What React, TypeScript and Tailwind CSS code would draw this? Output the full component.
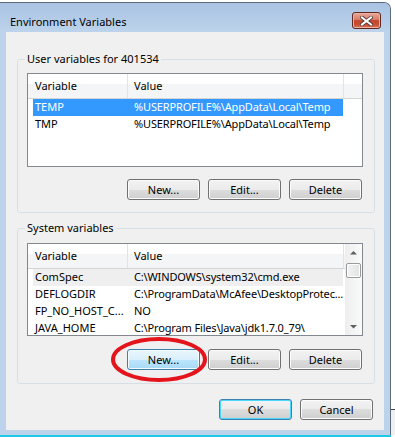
import React from "react";

const btn =
  "w-[73px] h-[21px] rounded-[3px] border border-[#707070] bg-[linear-gradient(to_bottom,#f2f2f2_0%,#ebebeb_50%,#dddddd_50%,#cfcfcf_100%)] shadow-[inset_0_0_0_1px_#fcfcfc] flex items-center justify-center text-black leading-none";
const btnHover =
  "w-[73px] h-[21px] rounded-[3px] border border-[#3c7fb1] bg-[linear-gradient(to_bottom,#eaf6fd_0%,#d9f0fc_50%,#bee6fd_50%,#a7d9f5_100%)] shadow-[inset_0_0_0_1px_#f4fbfe] flex items-center justify-center text-black leading-none";
const btnDefault =
  "w-[73px] h-[21px] rounded-[3px] border border-[#3c7fb1] bg-[linear-gradient(to_bottom,#f2f2f2_0%,#ebebeb_50%,#dddddd_50%,#cfcfcf_100%)] shadow-[inset_0_0_0_1px_#48d7fd] flex items-center justify-center text-black leading-none";

type Row = { name: string; value: string; state?: "sel" | "gray" };

function Header({ filler }: { filler: boolean }) {
  return (
    <div className="flex h-[25px] shrink-0 border-b border-[#d5d5d5] bg-[linear-gradient(to_bottom,#ffffff_0%,#ffffff_40%,#f4f5f7_40%,#f4f5f7_100%)]">
      <div className="w-[100px] pl-[7px] border-r border-[#e3e3e3] flex items-center">Variable</div>
      <div className="w-[216px] pl-[6px] border-r border-[#e3e3e3] flex items-center">Value</div>
      {filler ? <div className="flex-1" /> : null}
    </div>
  );
}

function Rows({ rows }: { rows: Row[] }) {
  return (
    <div className="flex flex-col pl-[5px]">
      {rows.map((r) => (
        <div
          key={r.name}
          className={
            r.state === "sel"
              ? "flex h-[17px] w-[310px] shrink-0 items-center bg-[#3399ff] text-white"
              : r.state === "gray"
              ? "flex h-[17px] w-[310px] shrink-0 items-center bg-[#efefef] text-black"
              : "flex h-[17px] w-[310px] shrink-0 items-center text-black"
          }
        >
          <div className="w-[94px] shrink-0 pl-[2px] whitespace-nowrap overflow-hidden">{r.name}</div>
          <div className="w-[216px] shrink-0 pl-[7px] whitespace-nowrap tracking-[-0.15px]">{r.value}</div>
        </div>
      ))}
    </div>
  );
}

function Arrow({ up }: { up: boolean }) {
  return (
    <svg width="17" height="17" viewBox="0 0 17 17">
      {up ? (
        <path d="M5 10.5 L8.5 7 L12 10.5 Z" fill="#606060" />
      ) : (
        <path d="M5 7 L8.5 10.5 L12 7 Z" fill="#606060" />
      )}
    </svg>
  );
}

export default function App() {
  const userRows: Row[] = [
    { name: "TEMP", value: "%USERPROFILE%\\AppData\\Local\\Temp", state: "sel" },
    { name: "TMP", value: "%USERPROFILE%\\AppData\\Local\\Temp" },
  ];
  const sysRows: Row[] = [
    { name: "ComSpec", value: "C:\\WINDOWS\\system32\\cmd.exe", state: "gray" },
    { name: "DEFLOGDIR", value: "C:\\ProgramData\\McAfee\\DesktopProtec..." },
    { name: "FP_NO_HOST_C...", value: "NO" },
    { name: "JAVA_HOME", value: "C:\\Program Files\\Java\\jdk1.7.0_79\\" },
  ];

  return (
    <div className="relative w-[395px] h-[437px] overflow-hidden bg-white font-['Segoe_UI','Noto_Sans',sans-serif] text-[11px] text-black">
      <div className="flex">
        {/* window */}
        <div className="mt-[2px] w-[391px] h-[433px] flex flex-col border-t border-r border-[#5b6b7c] rounded-tr-[7px] bg-[#bcd3eb] overflow-hidden">
          <div className="h-[29px] shrink-0 flex items-start bg-[linear-gradient(to_bottom,#a9c3e3,#bdd3eb)]">
            <div className="ml-[10px] mt-[11px] leading-[16px] text-[11px] text-black flex-1">Environment Variables</div>
            <div className="mt-[9px] mr-[9px] w-[29px] h-[17px] rounded-[3px] border border-[#5e2a22] bg-[linear-gradient(to_bottom,#e9a99b_0%,#d97b66_45%,#c34a2f_50%,#c74b31_75%,#d8765a_100%)] shadow-[inset_0_0_0_1px_#eab2a3] flex items-center justify-center">
              <svg width="13" height="10" viewBox="0 0 13 10">
                <path d="M2 1.5 L11 8.5 M11 1.5 L2 8.5" stroke="#4a3a38" strokeWidth="3.6" strokeLinecap="square" />
                <path d="M2 1.5 L11 8.5 M11 1.5 L2 8.5" stroke="#ffffff" strokeWidth="2" strokeLinecap="square" />
              </svg>
            </div>
          </div>
          {/* client area */}
          <div className="mx-[6px] w-[378px] h-[398px] shrink-0 bg-[#f0f0f0] flex flex-col">
            <fieldset className="mt-[19px] ml-[11px] w-[358px] border border-[#d5dfe5] rounded-[3px]">
              <legend className="ml-[7px] px-[2px] leading-[16px]">User variables for 401534</legend>
              <div className="pl-[9px] pr-[11px] pb-[12px]">
                <div className="mt-[6px] h-[94px] border border-[#828790] bg-white flex flex-col overflow-hidden">
                  <Header filler={true} />
                  <Rows rows={userRows} />
                </div>
                <div className="mt-[12px] flex justify-end gap-[8px] pr-[1px]">
                  <div className={btn}>New...</div>
                  <div className={btn}>Edit...</div>
                  <div className={btn}>Delete</div>
                </div>
              </div>
            </fieldset>

            <fieldset className="mt-[7px] ml-[11px] w-[358px] border border-[#d5dfe5] rounded-[3px]">
              <legend className="ml-[7px] px-[2px] leading-[16px]">System variables</legend>
              <div className="pl-[9px] pr-[11px] pb-[13px]">
                <div className="mt-[7px] h-[93px] border border-[#828790] bg-white flex overflow-hidden">
                  <div className="flex-1 flex flex-col overflow-hidden">
                    <Header filler={false} />
                    <Rows rows={sysRows} />
                  </div>
                  <div className="w-[17px] shrink-0 flex flex-col bg-[linear-gradient(to_right,#eeeeee,#fafafa)]">
                    <div className="h-[17px] shrink-0 flex items-center justify-center">
                      <Arrow up={true} />
                    </div>
                    <div className="mt-[2px] mx-[1px] h-[15px] rounded-[2px] border border-[#9a9a9a] bg-[linear-gradient(to_right,#f3f3f3,#e2e2e2)] shadow-[inset_0_0_0_1px_#ffffff]" />
                    <div className="flex-1" />
                    <div className="h-[17px] shrink-0 flex items-center justify-center">
                      <Arrow up={false} />
                    </div>
                  </div>
                </div>
                <div className="mt-[13px] flex justify-end gap-[8px] pr-[1px]">
                  <div className={btnHover}>New...</div>
                  <div className={btn}>Edit...</div>
                  <div className={btn}>Delete</div>
                </div>
              </div>
            </fieldset>

            <div className="mt-[15px] mr-[11px] flex justify-end gap-[8px]">
              <div className={btnDefault}>OK</div>
              <div className={btn}>Cancel</div>
            </div>
          </div>
        </div>
        {/* strip to the right of the window */}
        <div className="flex-1 flex flex-col">
          <div className="h-[409px] bg-white" />
          <div className="flex-1 border-t border-[#444444] bg-[#f0f0f0]" />
        </div>
      </div>
      <div className="absolute left-0 bottom-0 w-[391px] h-[2px] bg-[#1ec8e6]" />
      <svg className="absolute left-[109px] top-[335px]" width="100" height="50" viewBox="0 0 100 50">
        <ellipse cx="50" cy="24.5" rx="46" ry="20.5" fill="none" stroke="#e3141b" strokeWidth="4" />
      </svg>
    </div>
  );
}
